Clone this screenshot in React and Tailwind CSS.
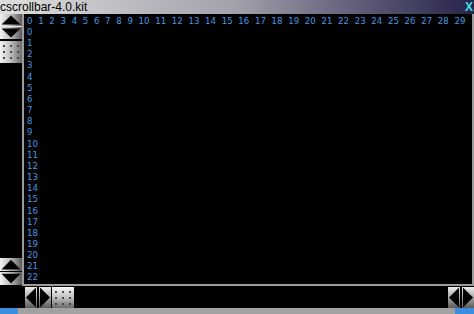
const cols = Array.from({ length: 30 }, (_, i) => i)
const rows = Array.from({ length: 23 }, (_, i) => i)

const VButton = ({ dir, h = "h-[12px]" }) => (
  <div className={`${h} w-[22px] bg-gradient-to-r from-[#f2f2f2] via-[#b8b8b8] to-[#5c5c5c]`}>
    <svg viewBox="0 0 22 12" preserveAspectRatio="none" className="w-full h-full block">
      {dir === "up" ? (
        <polygon points="11,1.5 20.5,10.5 1.5,10.5" fill="#000" />
      ) : (
        <polygon points="1.5,1.5 20.5,1.5 11,10.5" fill="#000" />
      )}
    </svg>
  </div>
)

const HButton = ({ dir }) => (
  <div className="h-[21px] w-[12px] bg-gradient-to-b from-[#f0f0f0] via-[#a8a8a8] to-[#5a5a5a]">
    <svg viewBox="0 0 12 21" preserveAspectRatio="none" className="w-full h-full block">
      {dir === "left" ? (
        <polygon points="1,10.5 11,0.5 11,20.5" fill="#000" />
      ) : (
        <polygon points="1,0.5 11,10.5 1,20.5" fill="#000" />
      )}
    </svg>
  </div>
)

const Dots = () => (
  <div className="grid grid-cols-3 gap-y-[4px] gap-x-[5px]">
    {Array.from({ length: 9 }, (_, i) => (
      <div key={i} className="w-[2px] h-[2px] bg-[#4a4a4a]" />
    ))}
  </div>
)

export default function App() {
  return (
    <div
      className="w-[474px] h-[314px] bg-black flex flex-col overflow-hidden"
      style={{ fontFamily: '"DejaVu Sans", Verdana, sans-serif' }}
    >
      {/* title bar */}
      <div className="h-[14px] flex items-center justify-between bg-gradient-to-r from-[#dedede] via-[#a2a0aa] to-[#26244a]">
        <span
          className="text-[12px] leading-[14px] text-black"
          style={{ fontFamily: '"Liberation Sans", Arial, sans-serif' }}
        >
          cscrollbar-4.0.kit
        </span>
        <span
          className="text-[12px] leading-[14px] font-bold text-[#3fe3e8] pr-[1px]"
          style={{ fontFamily: '"Liberation Sans", Arial, sans-serif' }}
        >
          X
        </span>
      </div>

      {/* main area */}
      <div className="flex h-[272px]">
        <div className="w-[22px] flex flex-col justify-between pb-[1px]">
          <div className="flex flex-col">
            <VButton dir="up" />
            <div className="h-[1px] bg-[#e8e8e8]" />
            <VButton dir="down" />
            <div className="h-[2px]" />
            <div className="h-[22px] w-[22px] bg-gradient-to-r from-[#f4f4f4] via-[#bcbcbc] to-[#6e6e6e] flex items-center justify-center">
              <Dots />
            </div>
          </div>
          <div className="flex flex-col gap-[1px]">
            <VButton dir="up" h="h-[13px]" />
            <VButton dir="down" h="h-[13px]" />
          </div>
        </div>
        <div className="flex-1 border-l-2 border-r-2 border-b-2 border-[#9c9c9c] pl-[3px] pt-[1px] text-[#3d9be9] text-[8.6px] overflow-hidden">
          <div className="flex gap-[5.7px] leading-[12px] whitespace-nowrap">
            {cols.map((c) => (
              <span key={c}>{c}</span>
            ))}
          </div>
          <div className="flex flex-col leading-[11.15px]">
            {rows.map((r) => (
              <span key={r}>{r}</span>
            ))}
          </div>
        </div>
      </div>

      {/* horizontal scrollbar */}
      <div className="h-[22px] flex items-start pt-[1px]">
        <div className="w-[25px]" />
        <HButton dir="left" />
        <div className="w-[2px]" />
        <HButton dir="right" />
        <div className="w-[1px]" />
        <div className="h-[21px] w-[22px] border-t border-white bg-gradient-to-b from-[#f4f4f4] via-[#bdbdbd] to-[#6a6a6a] flex items-center justify-center">
          <Dots />
        </div>
        <div className="flex-1" />
        <HButton dir="left" />
        <div className="w-[2px]" />
        <HButton dir="right" />
      </div>

      {/* bottom strip */}
      <div className="h-[6px] bg-[#a2a2a2] flex justify-between">
        <div className="w-[18px] bg-[#3c8ee0]" />
        <div className="w-[19px] bg-[#3c8ee0]" />
      </div>
    </div>
  )
}
